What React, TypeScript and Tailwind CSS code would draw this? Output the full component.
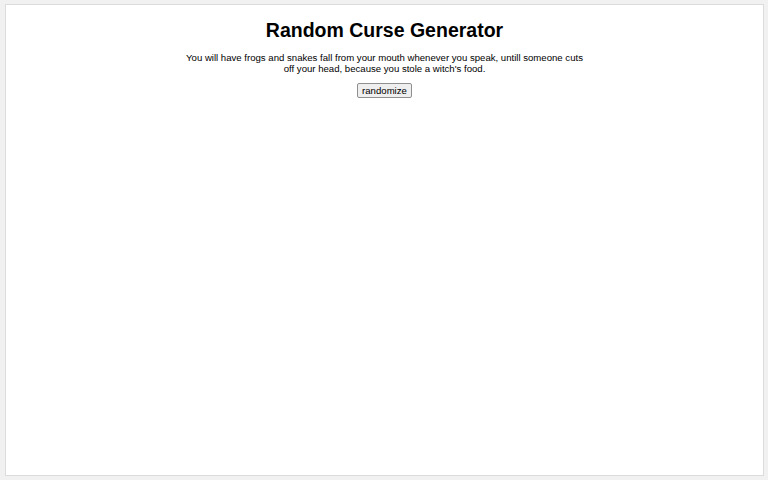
export default function App() {
  const curse =
    "You will have frogs and snakes fall from your mouth whenever you speak, untill someone cuts off your head, because you stole a witch's food.";

  return (
    <div className="h-[480px] w-[768px] bg-[#f1f1f1] pt-1 pl-[5px] pr-[4px] pb-1 font-['Liberation_Sans',Arial,sans-serif]">
      <main className="flex h-[472px] flex-col items-center border border-[#dcdcdc] bg-white text-black">
        <h1 className="mt-[13px] text-[19.5px] font-bold leading-[24px]">
          Random Curse Generator
        </h1>
        <p className="mt-[10px] w-[398px] text-center text-[9.6px] leading-[11px]">
          {curse}
        </p>
        <button className="mt-[9px] rounded-[2px] border border-[#8f8f8f] bg-[#efefef] px-[4px] text-[9.6px] leading-[13px]">
          randomize
        </button>
      </main>
    </div>
  );
}
